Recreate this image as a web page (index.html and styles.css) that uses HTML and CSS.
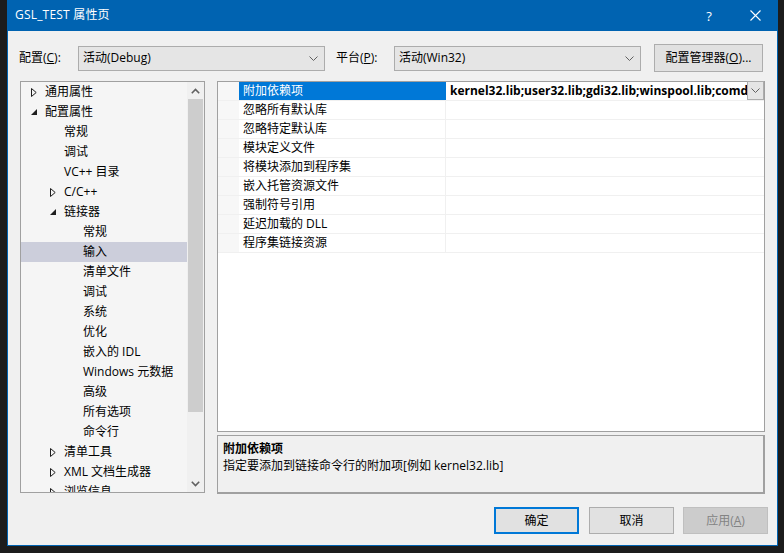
FILE: index.html
```html
<!DOCTYPE html>
<html lang="zh-CN">
<head>
<meta charset="utf-8">
<title>GSL_TEST 属性页</title>
<link rel="stylesheet" href="styles.css">
</head>
<body>
<div class="win">
  <div class="titlebar">
    <span class="title">GSL_TEST 属性页</span>
    <div class="caps">
      <span class="cap help">?</span>
      <span class="cap close"><svg width="11" height="11" viewBox="0 0 11 11"><path d="M0.5 0.5 L10.5 10.5 M10.5 0.5 L0.5 10.5" stroke="#fff" stroke-width="1.1"/></svg></span>
    </div>
  </div>

  <div class="toolbar">
    <span class="lbl lbl-cfg">配置(<u>C</u>):</span>
    <div class="combo"><span>活动(Debug)</span><svg class="chev" width="9" height="5" viewBox="0 0 9 5"><path d="M0.5 0.5 L4.5 4.5 L8.5 0.5" fill="none" stroke="#606060"/></svg></div>
    <span class="lbl lbl-plat">平台(<u>P</u>):</span>
    <div class="combo"><span>活动(Win32)</span><svg class="chev" width="9" height="5" viewBox="0 0 9 5"><path d="M0.5 0.5 L4.5 4.5 L8.5 0.5" fill="none" stroke="#606060"/></svg></div>
    <div class="btn mgr">配置管理器(<u>O</u>)...</div>
  </div>

  <div class="main">
    <div class="tree">
      <div class="nodes">
        <div class="node lv0"><span class="tw"><svg width="6" height="9" viewBox="0 0 6 9"><path d="M0.5 0.5 L5.2 4.5 L0.5 8.5 Z" fill="none" stroke="#1e1e1e"/></svg></span>通用属性</div>
        <div class="node lv0"><span class="tw"><svg width="6" height="6" viewBox="0 0 6 6"><path d="M6 0 L6 6 L0 6 Z" fill="#1e1e1e"/></svg></span>配置属性</div>
        <div class="node lv1"><span class="tw"></span>常规</div>
        <div class="node lv1"><span class="tw"></span>调试</div>
        <div class="node lv1"><span class="tw"></span>VC++ 目录</div>
        <div class="node lv1"><span class="tw"><svg width="6" height="9" viewBox="0 0 6 9"><path d="M0.5 0.5 L5.2 4.5 L0.5 8.5 Z" fill="none" stroke="#1e1e1e"/></svg></span>C/C++</div>
        <div class="node lv1"><span class="tw"><svg width="6" height="6" viewBox="0 0 6 6"><path d="M6 0 L6 6 L0 6 Z" fill="#1e1e1e"/></svg></span>链接器</div>
        <div class="node lv2"><span class="tw"></span>常规</div>
        <div class="node lv2 sel"><span class="tw"></span>输入</div>
        <div class="node lv2"><span class="tw"></span>清单文件</div>
        <div class="node lv2"><span class="tw"></span>调试</div>
        <div class="node lv2"><span class="tw"></span>系统</div>
        <div class="node lv2"><span class="tw"></span>优化</div>
        <div class="node lv2"><span class="tw"></span>嵌入的 IDL</div>
        <div class="node lv2"><span class="tw"></span>Windows 元数据</div>
        <div class="node lv2"><span class="tw"></span>高级</div>
        <div class="node lv2"><span class="tw"></span>所有选项</div>
        <div class="node lv2"><span class="tw"></span>命令行</div>
        <div class="node lv1"><span class="tw"><svg width="6" height="9" viewBox="0 0 6 9"><path d="M0.5 0.5 L5.2 4.5 L0.5 8.5 Z" fill="none" stroke="#1e1e1e"/></svg></span>清单工具</div>
        <div class="node lv1"><span class="tw"><svg width="6" height="9" viewBox="0 0 6 9"><path d="M0.5 0.5 L5.2 4.5 L0.5 8.5 Z" fill="none" stroke="#1e1e1e"/></svg></span>XML 文档生成器</div>
        <div class="node lv1"><span class="tw"><svg width="6" height="9" viewBox="0 0 6 9"><path d="M0.5 0.5 L5.2 4.5 L0.5 8.5 Z" fill="none" stroke="#1e1e1e"/></svg></span>浏览信息</div>
      </div>
      <div class="vscroll">
        <div class="arrow"><svg width="9" height="6" viewBox="0 0 9 6"><path d="M0.8 5.2 L4.5 1.5 L8.2 5.2" fill="none" stroke="#606060" stroke-width="1.6"/></svg></div>
        <div class="track"><div class="thumb"></div></div>
        <div class="arrow"><svg width="9" height="6" viewBox="0 0 9 6"><path d="M0.8 0.8 L4.5 4.5 L8.2 0.8" fill="none" stroke="#606060" stroke-width="1.6"/></svg></div>
      </div>
    </div>

    <div class="right">
      <div class="grid">
        <div class="row selrow"><span class="gut"></span><span class="name">附加依赖项</span><span class="val"><span class="vtext">kernel32.lib;user32.lib;gdi32.lib;winspool.lib;comdlg32.lib;advapi32.lib</span><span class="dd"><svg width="9" height="5" viewBox="0 0 9 5"><path d="M0.5 0.5 L4.5 4.5 L8.5 0.5" fill="none" stroke="#606060"/></svg></span></span></div>
        <div class="row"><span class="gut"></span><span class="name">忽略所有默认库</span><span class="val"></span></div>
        <div class="row"><span class="gut"></span><span class="name">忽略特定默认库</span><span class="val"></span></div>
        <div class="row"><span class="gut"></span><span class="name">模块定义文件</span><span class="val"></span></div>
        <div class="row"><span class="gut"></span><span class="name">将模块添加到程序集</span><span class="val"></span></div>
        <div class="row"><span class="gut"></span><span class="name">嵌入托管资源文件</span><span class="val"></span></div>
        <div class="row"><span class="gut"></span><span class="name">强制符号引用</span><span class="val"></span></div>
        <div class="row"><span class="gut"></span><span class="name">延迟加载的 DLL</span><span class="val"></span></div>
        <div class="row"><span class="gut"></span><span class="name">程序集链接资源</span><span class="val"></span></div>
      </div>
      <div class="desc">
        <div class="dtitle">附加依赖项</div>
        <div class="dtext">指定要添加到链接命令行的附加项[例如 kernel32.lib]</div>
      </div>
    </div>
  </div>

  <div class="buttons">
    <div class="btn ok">确定</div>
    <div class="btn">取消</div>
    <div class="btn dis">应用(<u>A</u>)</div>
  </div>
</div>
</body>
</html>
```
FILE: styles.css
```css
* { box-sizing: border-box; }
html, body { margin: 0; padding: 0; }
body {
  width: 784px;
  height: 553px;
  background: #1c1c1c;
  overflow: hidden;
  font-family: "Open Sans", "Noto Sans CJK SC", sans-serif;
  font-size: 12px;
  color: #000;
}
.win {
  margin-left: 7px;
  width: 771px;
  height: 546px;
  background: #f0f0f0;
  border: 1px solid #0063b1;
  border-top: none;
  display: flex;
  flex-direction: column;
}
.titlebar {
  height: 31px;
  flex: none;
  background: #0063b1;
  color: #fff;
  display: flex;
  align-items: center;
  justify-content: space-between;
  padding-left: 8px;
  margin: 0 -1px;
}
.title { font-size: 12px; line-height: 16px; margin-top: -1px; letter-spacing: 0.2px; }
.caps { display: flex; height: 31px; }
.cap {
  width: 46px;
  height: 31px;
  display: flex;
  align-items: center;
  justify-content: center;
}
.help { font-size: 13px; }
.close svg { display: block; }

.toolbar {
  flex: none;
  margin-top: 13px;
  height: 28px;
  display: flex;
  align-items: center;
  padding-left: 11px;
}
.lbl { white-space: nowrap; line-height: 16px; }
.lbl-cfg { width: 59px; }
.lbl-plat { width: 58px; margin-left: 11px; }
.combo {
  width: 247px;
  height: 25px;
  background: #e5e5e5;
  border: 1px solid #acacac;
  display: flex;
  align-items: center;
  justify-content: space-between;
  padding: 0 6px 0 4px;
  line-height: 16px;
}
.chev { display: block; }
.btn {
  height: 28px;
  background: #e1e1e1;
  border: 1px solid #adadad;
  display: flex;
  align-items: center;
  justify-content: center;
  white-space: nowrap;
  line-height: 16px;
}
.mgr { width: 109px; margin-left: 13px; }

.main {
  flex: none;
  margin-top: 9px;
  height: 413px;
  display: flex;
  padding-left: 12px;
  gap: 12px;
}
.tree {
  width: 185px;
  height: 412px;
  border: 1px solid #a0a0a0;
  background: #f5f5f5;
  display: flex;
}
.nodes {
  flex: 1;
  min-width: 0;
  overflow: hidden;
}
.node {
  height: 20px;
  display: flex;
  align-items: center;
  white-space: nowrap;
  line-height: 16px;
}
.node.lv0 { padding-left: 10px; }
.node.lv1 { padding-left: 29px; }
.node.lv2 { padding-left: 48px; }
.node.sel { background: #cccedb; }
.tw {
  width: 14px;
  flex: none;
  display: flex;
  align-items: center;
}
.tw svg { display: block; }
.vscroll {
  width: 17px;
  flex: none;
  background: #f0f0f0;
  display: flex;
  flex-direction: column;
}
.arrow {
  height: 17px;
  flex: none;
  display: flex;
  align-items: center;
  justify-content: center;
}
.arrow svg { display: block; }
.track { flex: 1; padding: 0 1px; }
.thumb { height: 313px; background: #cdcdcd; }

.right {
  width: 548px;
  display: flex;
  flex-direction: column;
  gap: 3px;
}
.grid {
  height: 351px;
  border: 1px solid #a0a0a0;
  background: #fff;
}
.row {
  height: 19px;
  display: flex;
  border-bottom: 1px solid #f0f0f0;
  line-height: 16px;
}
.gut { width: 21px; flex: none; background: #f7f7f7; }
.name {
  width: 207px;
  flex: none;
  border-right: 1px solid #f0f0f0;
  padding-left: 4px;
  display: flex;
  align-items: center;
  white-space: nowrap;
}
.selrow .name { background: #0078d7; color: #fff; border-right-color: #0078d7; }
.val {
  flex: 1;
  min-width: 0;
  display: flex;
  align-items: center;
}
.vtext {
  flex: 1;
  min-width: 0;
  overflow: hidden;
  white-space: nowrap;
  font-weight: bold;
  padding-left: 4px;
}
.dd {
  width: 17px;
  height: 19px;
  flex: none;
  background: #e5e5e5;
  border: 1px solid #acacac;
  display: flex;
  align-items: center;
  justify-content: center;
  margin-top: -1px;
}
.dd svg { display: block; }
.desc {
  height: 59px;
  border: 1px solid #a0a0a0;
  border-right-width: 2px;
  border-bottom-width: 2px;
  background: #f0f0f0;
  padding: 4px 5px;
  line-height: 17px;
}
.dtitle { font-weight: bold; }

.buttons {
  flex: none;
  margin-top: 13px;
  height: 27px;
  display: flex;
  justify-content: flex-end;
  gap: 10px;
  padding-right: 9px;
}
.buttons .btn { width: 85px; height: 27px; }
.buttons .btn + .btn + .btn { margin-left: -1px; }
.ok { border: 2px solid #0078d7; }
.dis { background: #cccccc; border-color: #bfbfbf; color: #838383; }
```
